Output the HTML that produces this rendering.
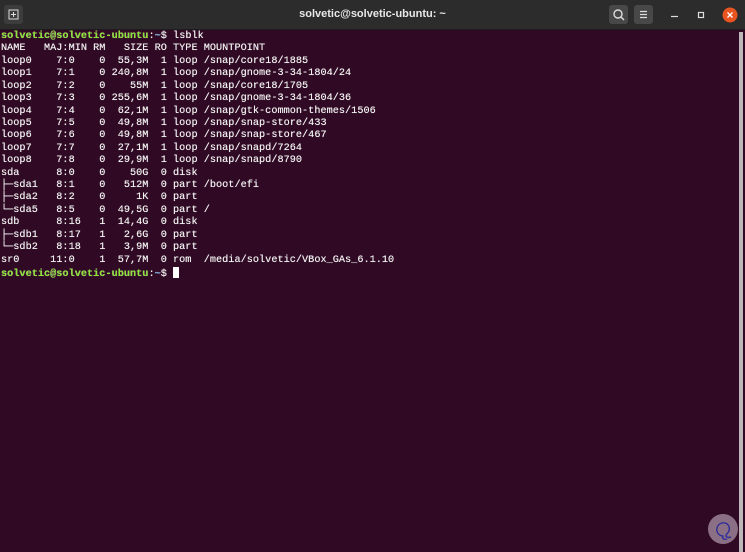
<!DOCTYPE html>
<html><head><meta charset="utf-8"><style>
html,body{margin:0;padding:0;width:745px;height:552px;overflow:hidden;background:#300a24}
.tb{position:absolute;left:0;top:0;width:745px;height:29px;background:#2c2c2c;border-bottom:1px solid #1c1c1c}
.title{position:absolute;left:0;width:745px;top:8px;text-align:center;color:#e8e8e8;font:bold 11px "Liberation Sans",sans-serif}
.btn{position:absolute;top:5px;width:19px;height:19px;background:#484848;border-radius:3px}
pre{position:absolute;left:1px;top:31px;margin:0;font:10.2px/12.42px "Liberation Mono",monospace;color:#f0f0f0;letter-spacing:0.03px;text-shadow:0 0 0.4px #fff}
.g{color:#8ae234;font-weight:bold}.b{color:#729fcf;font-weight:bold}
.cur{display:inline-block;width:6px;height:11px;background:#fff;vertical-align:-2px}
.sb{position:absolute;left:739px;top:32px;width:4px;height:520px;background:#bdb6bb}
</style></head><body>
<div class="tb">
<div class="btn" style="left:4px;background:#3c3c3c"><svg width="19" height="19"><rect x="5" y="5" width="9" height="9" fill="none" stroke="#ddd" stroke-width="1"/><path d="M9.5 7v5M7 9.5h5" stroke="#ddd"/></svg></div>
<div class="title">solvetic@solvetic-ubuntu: ~</div>
<div class="btn" style="left:609px"><svg width="19" height="19"><circle cx="9" cy="9" r="4" fill="none" stroke="#ddd" stroke-width="1.4"/><path d="M12 12l3 3" stroke="#ddd" stroke-width="1.4"/></svg></div>
<div class="btn" style="left:634px"><svg width="19" height="19"><path d="M6 6.5h7M6 9.5h7M6 12.5h7" stroke="#ddd" stroke-width="1.2"/></svg></div>
<svg style="position:absolute;left:668px;top:6px" width="70" height="19"><path d="M3 10.5h7" stroke="#ddd" stroke-width="1.2"/><rect x="30.5" y="6.5" width="5" height="5" fill="none" stroke="#ddd" stroke-width="1.2"/><circle cx="62" cy="9" r="7.5" fill="#e95420"/><path d="M59.5 6.5l5 5M64.5 6.5l-5 5" stroke="#fff" stroke-width="1.3"/></svg>
</div>
<pre><span class="g">solvetic@solvetic-ubuntu</span>:<span class="b">~</span>$ lsblk
NAME   MAJ:MIN RM   SIZE RO TYPE MOUNTPOINT
loop0    7:0    0  55,3M  1 loop /snap/core18/1885
loop1    7:1    0 240,8M  1 loop /snap/gnome-3-34-1804/24
loop2    7:2    0    55M  1 loop /snap/core18/1705
loop3    7:3    0 255,6M  1 loop /snap/gnome-3-34-1804/36
loop4    7:4    0  62,1M  1 loop /snap/gtk-common-themes/1506
loop5    7:5    0  49,8M  1 loop /snap/snap-store/433
loop6    7:6    0  49,8M  1 loop /snap/snap-store/467
loop7    7:7    0  27,1M  1 loop /snap/snapd/7264
loop8    7:8    0  29,9M  1 loop /snap/snapd/8790
sda      8:0    0    50G  0 disk 
├─sda1   8:1    0   512M  0 part /boot/efi
├─sda2   8:2    0     1K  0 part 
└─sda5   8:5    0  49,5G  0 part /
sdb      8:16   1  14,4G  0 disk 
├─sdb1   8:17   1   2,6G  0 part 
└─sdb2   8:18   1   3,9M  0 part 
sr0     11:0    1  57,7M  0 rom  /media/solvetic/VBox_GAs_6.1.10
<span class="g">solvetic@solvetic-ubuntu</span>:<span class="b">~</span>$ <span class="cur"></span></pre>
<div class="sb"></div>
<svg style="position:absolute;left:707px;top:513px" width="32" height="34"><circle cx="16" cy="16" r="15" fill="#8a6f85"/><path d="M20 26c-4 1-5-1-4-3-4 0-7-4-6-8 1-4 5-6 8-5 4 1 5 5 4 8-1 2-3 3-3 5 0 1 2 2 5 1" fill="none" stroke="#2a2a9a" stroke-width="1.3"/></svg>
</body></html>
